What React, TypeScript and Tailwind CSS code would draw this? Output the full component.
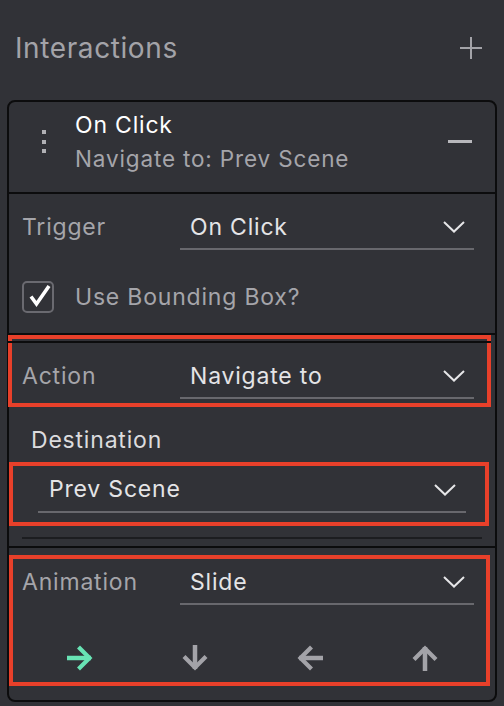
import React from 'react'

const font = {fontFamily: 'Inter, "Noto Sans", sans-serif'}

function Chevron() {
  return (
    <svg width="22" height="12" viewBox="0 0 22 12" fill="none">
      <path d="M1 1 L11 10.5 L21 1" stroke="#e6e6e8" strokeWidth="2" />
    </svg>
  )
}

function SelectBox({value, className}: {value: string; className?: string}) {
  return (
    <div className={`flex items-center justify-between border-b-2 border-[#68686d] ${className ?? ''}`}>
      <span className="text-[23px] text-[#e4e4e6] tracking-[0.8px]">{value}</span>
      <Chevron />
    </div>
  )
}

function Row({label, value, className}: {label: string; value: string; className?: string}) {
  return (
    <div className={`flex items-center ${className ?? ''}`}>
      <span className="w-[158px] text-[23px] text-[#a5a5aa] tracking-[0.8px]">{label}</span>
      <SelectBox value={value} className="flex-1 h-[46px] pl-[10px] pr-[9px] pt-[2px]" />
    </div>
  )
}

function Arrow({dir, color}: {dir: 'right' | 'down' | 'left' | 'up'; color: string}) {
  const rot = {right: 0, down: 90, left: 180, up: 270}[dir]
  return (
    <svg width="26" height="26" viewBox="0 0 26 26" fill="none" style={{transform: `rotate(${rot}deg)`}}>
      <path d="M0 13 H24" stroke={color} strokeWidth="4.5" />
      <path d="M11.5 2 L22.5 13 L11.5 24" stroke={color} strokeWidth="4.2" />
    </svg>
  )
}

export default function App() {
  return (
    <div className="w-[504px] h-[706px] bg-[#313237] overflow-hidden" style={font}>
      <div className="h-[100px] flex items-center justify-between pl-[15px] pr-[22px] pb-[4px]">
        <span className="text-[28px] text-[#a3a3a8] tracking-[0.6px]">Interactions</span>
        <svg width="22" height="22" viewBox="0 0 22 22">
          <path d="M11 0 V22 M0 11 H22" stroke="#a3a3a8" strokeWidth="2" />
        </svg>
      </div>

      <div className="mx-[7px] h-[602px] border-2 border-[#0c0c0d] rounded-[8px] flex flex-col">
        {/* header */}
        <div className="h-[92px] shrink-0 flex items-center border-b-2 border-[#0c0c0d] pl-[33px] pr-[23px] pb-[11px]">
          <div className="flex flex-col gap-[5.5px] w-[4px] mr-[29px]">
            <div className="w-[4px] h-[4px] bg-[#b0b0b4]" />
            <div className="w-[4px] h-[4px] bg-[#b0b0b4]" />
            <div className="w-[4px] h-[4px] bg-[#b0b0b4]" />
          </div>
          <div className="flex-1 flex flex-col gap-[4px]">
            <span className="text-[23px] text-white tracking-[0.8px] leading-[30px]">On Click</span>
            <span className="text-[22.5px] text-[#a5a5aa] tracking-[0.85px] leading-[30px]">Navigate to: Prev Scene</span>
          </div>
          <div className="w-[24px] h-[3px] bg-[#b8b8bc]" />
        </div>

        {/* trigger */}
        <div className="h-[141px] shrink-0 border-b-2 border-[#0c0c0d] pt-[10px]">
          <Row label="Trigger" value="On Click" className="pl-[13px] pr-[21px]" />
          <div className="flex items-center pl-[13px] mt-[30px]">
            <div className="w-[32px] h-[32px] border-2 border-[#6a6a70] rounded-[5px]">
              <svg width="28" height="28" viewBox="0 0 28 28" fill="none">
                <path d="M7 13.5 L12.5 21 L25 3" stroke="#ffffff" strokeWidth="3.6" />
              </svg>
            </div>
            <span className="ml-[21px] text-[23px] text-[#a5a5aa] tracking-[0.8px]">Use Bounding Box?</span>
          </div>
        </div>

        {/* action */}
        <div className="h-[213px] shrink-0 border-b-2 border-[#0c0c0d] flex flex-col">
          <div className="-ml-[1px] mr-[4px] border-[4px] border-[#e8402a] h-[72px] flex flex-col">
            <div className="h-[2px] bg-[#0c0c0d] mt-[2px] -mx-[4px]" />
            <Row label="Action" value="Navigate to" className="mt-[10px] pl-[10px] pr-[13px]" />
          </div>
          <div className="pl-[22px] mt-[19px] text-[23px] text-[#dcdcde] tracking-[0.8px] leading-[28px]">Destination</div>
          <div className="mr-[6px] mt-[8px] border-[4px] border-[#e8402a] h-[64px] pl-[25px] pr-[19px] flex">
            <SelectBox value="Prev Scene" className="flex-1 h-[47px] pl-[11px] pr-[10px] pt-[2px]" />
          </div>
          <div className="mx-[13px] mt-[11px] h-[2px] bg-[#1c1d20]" />
        </div>

        {/* animation */}
        <div className="flex-1 pt-[7px]">
          <div className="mr-[5px] border-[4px] border-[#e8402a] h-[131px] flex flex-col">
            <Row label="Animation" value="Slide" className="pl-[9px] pr-[12px]" />
            <div className="flex pl-[54px] gap-[89px] mt-[40px]">
              <Arrow dir="right" color="#68e3b4" />
              <Arrow dir="down" color="#a3a3a8" />
              <Arrow dir="left" color="#a3a3a8" />
              <Arrow dir="up" color="#a3a3a8" />
            </div>
          </div>
        </div>
      </div>
    </div>
  )
}
